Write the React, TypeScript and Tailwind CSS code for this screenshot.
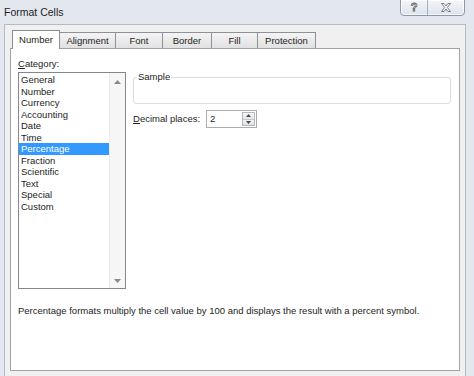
import React from "react";

const categories = [
  "General",
  "Number",
  "Currency",
  "Accounting",
  "Date",
  "Time",
  "Percentage",
  "Fraction",
  "Scientific",
  "Text",
  "Special",
  "Custom",
];

const tabs = [
  { label: "Number", w: "w-[48px]" },
  { label: "Alignment", w: "w-[57px]" },
  { label: "Font", w: "w-[48px]" },
  { label: "Border", w: "w-[50px]" },
  { label: "Fill", w: "w-[47px]" },
  { label: "Protection", w: "w-[59px]" },
];

const Arrow = ({ down = false }: { down?: boolean }) => (
  <svg width="7" height="4" viewBox="0 0 7 4" className="block">
    <path d={down ? "M0 0H7L3.5 4Z" : "M0 4H7L3.5 0Z"} fill="#8a8a8a" />
  </svg>
);

const TitleButtons = () => (
  <div className="ml-auto mr-[9px] -mt-px flex h-[17px] rounded-b-[4px] border border-[#8e99a6] bg-gradient-to-b from-[#f3f6f9] to-[#dde4eb] shadow-[inset_0_0_0_1px_rgba(255,255,255,0.7)]">
    <div className="flex w-[27px] items-center justify-center border-r border-[#a7b1bc]">
      <span className="text-[11px] font-bold leading-none text-white [-webkit-text-stroke:0.8px_#5a5f66]">?</span>
    </div>
    <div className="flex w-[36px] items-center justify-center">
      <svg width="10" height="9" viewBox="0 0 10 9">
        <path
          d="M0.5 0.5H3L5 3L7 0.5H9.5L6.3 4.5L9.5 8.5H7L5 6L3 8.5H0.5L3.7 4.5Z"
          fill="#fff"
          stroke="#5a5f66"
          strokeWidth="0.8"
          strokeLinejoin="round"
        />
      </svg>
    </div>
  </div>
);

export default function App() {
  return (
    <div className="flex h-[376px] w-[474px] flex-col overflow-hidden bg-[#e3e8ee] font-['Liberation_Sans',Arial,sans-serif] text-[9.5px] text-[#1e1e1e]">
      <div className="flex h-[24px] shrink-0">
        <div className="pl-[4px] pt-[6px] text-[10.5px] leading-[12px]">Format Cells</div>
        <TitleButtons />
      </div>

      <div className="ml-[4px] w-[462px] flex-1 border border-b-0 border-[#b3bbc5] bg-[#f0f0f0] pl-[5px] pt-[5px]">
        {/* tab strip */}
        <div className="relative z-10 ml-[2px] flex h-[19px] items-end">
          {tabs.map((t, i) =>
            i === 0 ? (
              <div
                key={t.label}
                className={`${t.w} flex h-[19px] items-start justify-center border border-b-0 border-[#898c95] bg-white pt-[3px] leading-[11px]`}
              >
                {t.label}
              </div>
            ) : (
              <div
                key={t.label}
                className={`${t.w} -ml-px mb-px flex h-[16px] items-start justify-center border border-b-0 border-[#8e9199] bg-gradient-to-b from-[#f4f4f4] to-[#e1e1e1] pt-[2px] leading-[11px]`}
              >
                {t.label}
              </div>
            )
          )}
        </div>

        {/* tab pane */}
        <div className="-mt-px h-[323px] w-[450px] border border-[#a2a2a2] bg-white px-[7px] pt-[8px]">
          <div className="flex gap-[7px]">
            <div className="w-[108px]">
              <div className="h-[13px] leading-[13px]">
                <span className="underline underline-offset-1">C</span>ategory:
              </div>
              <div className="mt-[2px] flex h-[217px] border border-[#828790]">
                <div className="flex-1 pt-px">
                  {categories.map((c) => (
                    <div
                      key={c}
                      className={`h-[11.5px] pl-[2px] leading-[11.5px] ${
                        c === "Percentage" ? "bg-[#3399ff] text-white" : ""
                      }`}
                    >
                      {c}
                    </div>
                  ))}
                </div>
                <div className="flex w-[16px] flex-col items-center justify-between border-l border-[#ececec] bg-[#f6f6f6] pb-[5px] pt-[7px]">
                  <Arrow />
                  <Arrow down />
                </div>
              </div>
            </div>

            <div className="w-[318px]">
              <fieldset className="mt-[15px] h-[32px] rounded-[3px] border border-[#d5dfe5]">
                <legend className="ml-[3px] px-px leading-[10px]">Sample</legend>
              </fieldset>
              <div className="mt-[6px] flex h-[18px] items-center">
                <div className="w-[73px]">
                  <span className="underline underline-offset-1">D</span>ecimal places:
                </div>
                <div className="flex h-[18px] w-[51px] border border-[#abadb3] bg-white">
                  <div className="flex-1 pl-[3px] leading-[16px]">2</div>
                  <div className="m-px flex w-[13px] flex-col border border-[#b5b9bf]">
                    <div className="flex flex-1 items-center justify-center border-b border-[#c4c8cd] bg-gradient-to-b from-[#f7f7f7] to-[#e6e6e6]">
                      <svg width="5" height="3" viewBox="0 0 5 3">
                        <path d="M0 3H5L2.5 0Z" fill="#4a4a4a" />
                      </svg>
                    </div>
                    <div className="flex flex-1 items-center justify-center bg-gradient-to-b from-[#f3f3f3] to-[#e2e2e2]">
                      <svg width="5" height="3" viewBox="0 0 5 3">
                        <path d="M0 0H5L2.5 3Z" fill="#4a4a4a" />
                      </svg>
                    </div>
                  </div>
                </div>
              </div>
            </div>
          </div>

          <p className="mt-[16px] leading-[11px]">
            Percentage formats multiply the cell value by 100 and displays the result with a percent symbol.
          </p>
        </div>
      </div>
    </div>
  );
}
